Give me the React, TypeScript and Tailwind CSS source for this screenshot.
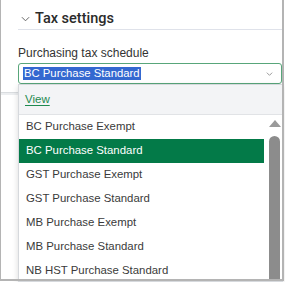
import React from "react";

const options = [
  "BC Purchase Exempt",
  "BC Purchase Standard",
  "GST Purchase Exempt",
  "GST Purchase Standard",
  "MB Purchase Exempt",
  "MB Purchase Standard",
  "NB HST Purchase Standard",
];

function Chevron({ className }: { className?: string }) {
  return (
    <svg viewBox="0 0 10 6" className={className} fill="none" stroke="currentColor" strokeWidth="1.1">
      <path d="M1 1l4 4 4-4" />
    </svg>
  );
}

export default function App() {
  const selected = "BC Purchase Standard";
  return (
    <div
      className="relative w-[285px] h-[282px] overflow-hidden bg-white"
      style={{ fontFamily: '"Liberation Sans", Arial, sans-serif' }}
    >
      <div className="absolute inset-0 right-[1px] bottom-[1px] border-l border-r-2 border-b-2 border-[#b4b4b4] pointer-events-none z-20" />

      <div className="pl-[18px] pr-[3px] pt-[9px]">
        <div className="flex items-center h-[20px] border-b border-[#dfe2ea] box-content">
          <Chevron className="w-[9px] h-[6px] ml-[3px] mr-[5px] text-[#666]" />
          <span className="font-['Roboto',sans-serif] text-[14.5px] font-medium text-[#2b2b2b] leading-none">
            Tax settings
          </span>
        </div>

        <div className="mt-[16px] text-[12px] leading-[14px] text-[#333]">Purchasing tax schedule</div>

        <div className="mt-[3px] flex items-center h-[21px] border border-[#58a67a] rounded-[3px] pl-[4px] pr-[8px]">
          <span className="bg-[#3468d0] text-white text-[11.3px] leading-[13px] px-[1px]">{selected}</span>
          <Chevron className="ml-auto w-[7px] h-[4px] text-[#777]" />
        </div>
      </div>

      <div className="absolute left-0 top-[92px] w-[18px] h-[3px] bg-[#eceef0] border-t border-[#d9dcdf]" />

      <div className="absolute left-[18px] top-[84px] w-[265px] bottom-0 border border-[#d6d9dd] bg-white shadow-[0_2px_6px_rgba(0,0,0,0.15)] z-10 flex flex-col">
        <div className="h-[30px] bg-[#f3f4f6] border-b border-[#e1e3e6] flex items-center pl-[6px]">
          <span className="text-[11.5px] text-[#1f8a50] underline underline-offset-2">View</span>
        </div>
        <div className="flex flex-1 min-h-0">
          <div className="flex-1 flex flex-col">
            {options.map((o) => (
              <div
                key={o}
                className={
                  "h-[24px] shrink-0 flex items-center pl-[7px] text-[11.4px] " +
                  (o === selected ? "bg-[#037a48] text-white" : "text-[#3a3a3a]")
                }
              >
                {o}
              </div>
            ))}
          </div>
          <div className="w-[18px] flex flex-col items-center pt-[5px]">
            <svg viewBox="0 0 12 7" className="w-[12px] h-[7px] ml-[3px] text-[#9a9a9a]" fill="currentColor">
              <path d="M6 0l6 7H0z" />
            </svg>
            <div className="mt-[9px] ml-[3px] w-[11px] flex-1 bg-[#8c8c8c] rounded-t-full" />
          </div>
        </div>
      </div>
    </div>
  );
}
